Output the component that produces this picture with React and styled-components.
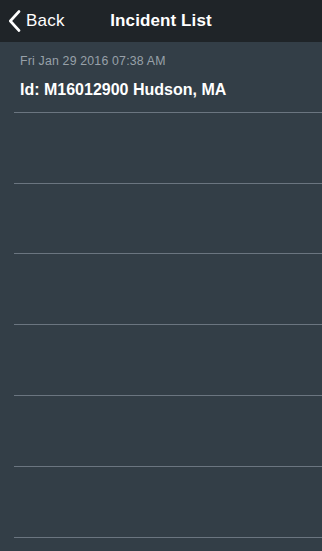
import React from 'react'
import styled, { createGlobalStyle } from 'styled-components'

const GlobalStyle = createGlobalStyle`
  html, body {
    margin: 0;
    padding: 0;
    background: #333e47;
    font-family: "Liberation Sans", Arial, sans-serif;
  }
`

const Screen = styled.div`
  width: 322px;
  height: 551px;
  display: flex;
  flex-direction: column;
  background: #333e47;
  overflow: hidden;
`

const NavBar = styled.div`
  height: 42px;
  flex: none;
  background: #1f2428;
  display: grid;
  grid-template-columns: 1fr auto 1fr;
  align-items: center;
  color: #fff;
`

const BackButton = styled.div`
  display: flex;
  align-items: center;
  gap: 5px;
  padding-left: 8px;
  font-size: 17px;
  letter-spacing: 0.2px;
  svg {
    display: block;
  }
`

const Title = styled.div`
  font-size: 17px;
  font-weight: bold;
  letter-spacing: 0.1px;
`

const List = styled.div`
  display: flex;
  flex-direction: column;
`

const Row = styled.div`
  height: 70.83px;
  box-sizing: border-box;
  margin-left: 14px;
  border-bottom: 1px solid #6b7580;
  padding: 12px 0 0 6px;
`

const DateText = styled.div`
  font-size: 12.3px;
  color: #98a1a9;
  letter-spacing: 0.2px;
`

const IdText = styled.div`
  margin-top: 13px;
  font-size: 16px;
  font-weight: bold;
  color: #fff;
`

const incidents = [
  { date: 'Fri Jan 29 2016 07:38 AM', label: 'Id: M16012900 Hudson, MA' }
]

export default function App () {
  const rows = [...incidents, ...Array(6).fill(null)]
  return (
    <Screen>
      <GlobalStyle />
      <NavBar>
        <BackButton>
          <svg width="13" height="22" viewBox="0 0 13 22">
            <path d="M11 1.5 L2.3 11 L11 20.5" fill="none" stroke="#fff" strokeWidth="2.6" strokeLinecap="round" strokeLinejoin="round" />
          </svg>
          Back
        </BackButton>
        <Title>Incident List</Title>
        <div />
      </NavBar>
      <List>
        {rows.map((item, i) => (
          <Row key={i}>
            {item && (
              <>
                <DateText>{item.date}</DateText>
                <IdText>{item.label}</IdText>
              </>
            )}
          </Row>
        ))}
      </List>
    </Screen>
  )
}
